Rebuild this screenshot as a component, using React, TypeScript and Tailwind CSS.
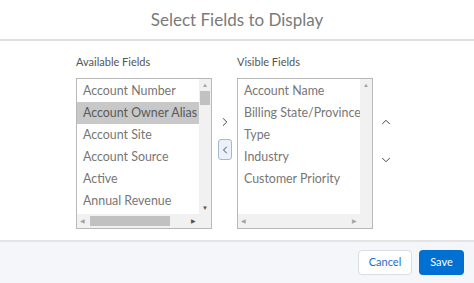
import React from 'react';
import { ChevronRight, ChevronLeft, ChevronUp, ChevronDown } from 'lucide-react';

const available = ['Account Number', 'Account Owner Alias', 'Account Site', 'Account Source', 'Active', 'Annual Revenue'];
const visible = ['Account Name', 'Billing State/Province', 'Type', 'Industry', 'Customer Priority'];

const ListBox: React.FC<{ items: string[]; selected?: number; thumb?: boolean }> = ({ items, selected, thumb }) => (
  <div className="relative w-[136px] h-[151px] border border-[#b8b8b8] bg-white overflow-hidden">
    <div className="pt-[1px] pr-[12px]">
      {items.map((item, i) => (
        <div
          key={item}
          className={`h-[22px] leading-[22px] pl-[6px] whitespace-nowrap overflow-hidden text-[12.4px] ${i === selected ? 'bg-[#c8c8c8] text-[#5a5a5a]' : 'text-[#767676]'}`}
        >
          {item}
        </div>
      ))}
    </div>
    {/* vertical scrollbar */}
    <div className="absolute right-0 top-0 bottom-[14px] w-[12px] bg-[#f1f1f1] flex flex-col items-center">
      <span className="text-[6px] text-[#a3a3a3] mt-[3px] leading-none">▲</span>
      {thumb && <div className="w-[10px] h-[14px] bg-[#c1c1c1] mt-[3px]" />}
      <span className="text-[6px] text-[#505050] mt-auto mb-[3px] leading-none">{thumb ? '▼' : ''}</span>
    </div>
    {/* horizontal scrollbar */}
    <div className="absolute left-0 right-0 bottom-0 h-[14px] bg-[#f1f1f1] flex items-center">
      <span className="text-[6px] text-[#a3a3a3] ml-[3px] leading-none">◀</span>
      {thumb && <div className="h-[10px] w-[80px] bg-[#c1c1c1] ml-[5px]" />}
      <span className={`text-[6px] ${thumb ? 'text-[#505050]' : 'text-[#a3a3a3]'} ml-auto mr-[15px] leading-none`}>▶</span>
    </div>
  </div>
);

const App: React.FC = () => {
  return (
    <div className="w-[474px] h-[283px] bg-white flex flex-col" style={{ fontFamily: 'Lato, "Open Sans", sans-serif' }}>
      <div className="h-[41px] border-b-2 border-[#e0e0e0] flex items-center justify-center">
        <h1 className="text-[17px] text-[#7a7a7a]">Select Fields to Display</h1>
      </div>

      <div className="flex-1 flex pl-[76px] pt-[13px]">
        <div className="flex flex-col">
          <div className="text-[11px] text-[#555] h-[24px] leading-[16px]">Available Fields</div>
          <ListBox items={available} selected={1} thumb />
        </div>

        <div className="w-[25px] flex flex-col items-center pt-[61px]">
          <ChevronRight size={14} strokeWidth={1.7} className="text-[#444]" />
          <div className="mt-[10px] w-[14px] h-[21px] border border-[#a8b8cc] bg-[#eaf1fa] rounded-[3px] flex items-center justify-center">
            <ChevronLeft size={14} strokeWidth={1.9} className="text-[#444]" />
          </div>
        </div>

        <div className="flex flex-col">
          <div className="text-[11px] text-[#555] h-[24px] leading-[16px]">Visible Fields</div>
          <ListBox items={visible} />
        </div>

        <div className="w-[24px] flex flex-col items-center pt-[61px] ml-[1px]">
          <ChevronUp size={14} strokeWidth={1.7} className="text-[#444]" />
          <ChevronDown size={14} strokeWidth={1.7} className="text-[#444] mt-[24px]" />
        </div>
      </div>

      <div className="h-[43px] border-t-2 border-[#e4e4e4] bg-[#f5f6fa] flex items-center justify-end gap-[7px] pr-[10px]">
        <button className="w-[54px] h-[25px] bg-white border border-[#d8dde6] rounded-[4px] text-[11px] text-[#1b6fc8]">Cancel</button>
        <button className="w-[45px] h-[25px] bg-[#0070d2] rounded-[4px] text-[11px] text-white">Save</button>
      </div>
    </div>
  );
};

export default App;
